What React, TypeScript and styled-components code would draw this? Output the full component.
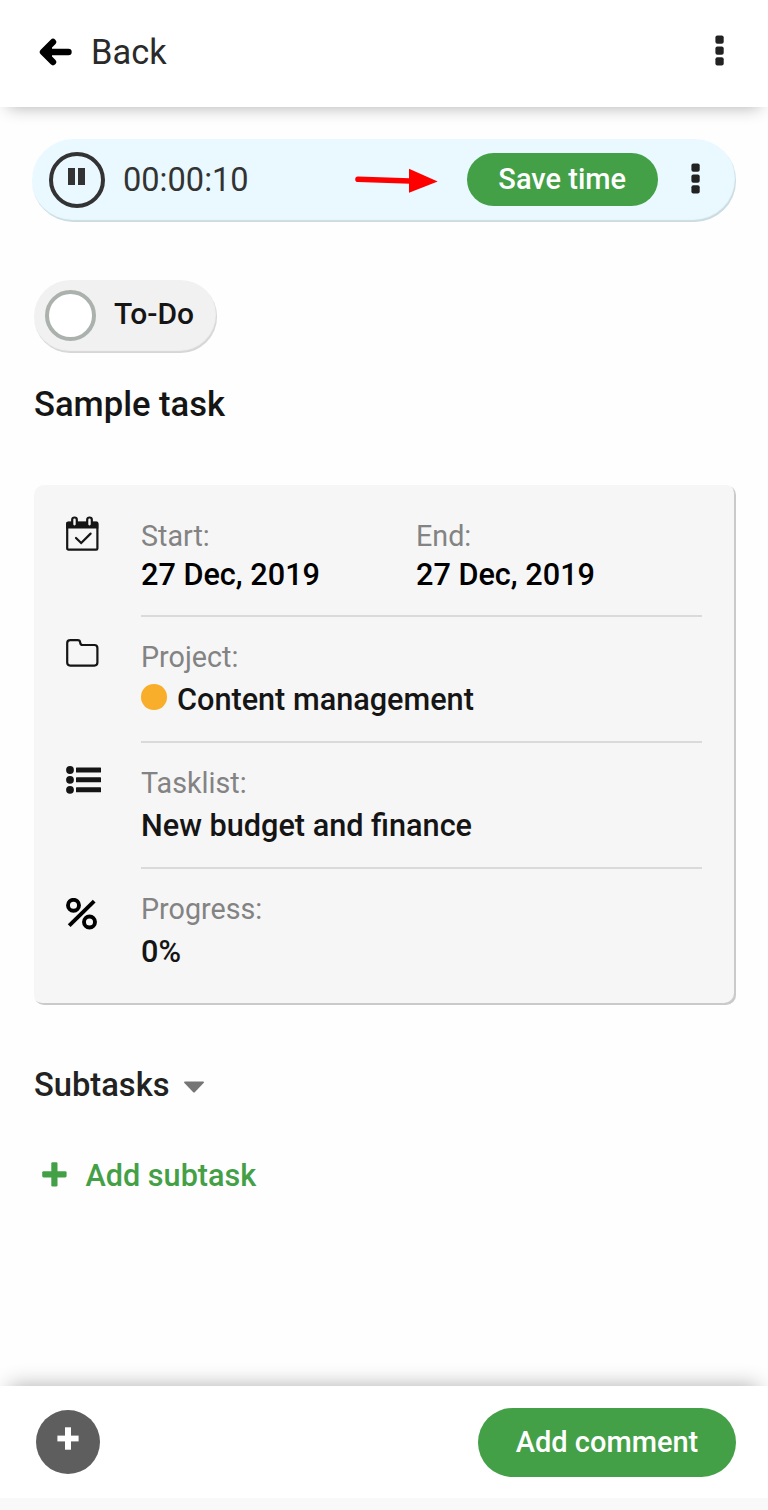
import React from "react";
import styled, { createGlobalStyle } from "styled-components";

const GlobalStyle = createGlobalStyle`
  * { box-sizing: border-box; }
  body {
    margin: 0;
    background: #fefefe;
    font-family: Roboto, "Liberation Sans", sans-serif;
    color: #151515;
  }
  button {
    font-family: inherit;
    border: 0;
    padding: 0;
    margin: 0;
    background: none;
    cursor: pointer;
    color: inherit;
  }
  svg { display: block; flex: none; }
`;

const Screen = styled.div`
  width: 100%;
  height: 1510px;
  display: flex;
  flex-direction: column;
`;

const Header = styled.header`
  height: 107px;
  flex: none;
  display: flex;
  align-items: flex-start;
  justify-content: space-between;
  padding: 32px 44.5px 0 39px;
  background: #fff;
  box-shadow: 0 8px 16px -8px rgba(0, 0, 0, 0.32);
`;

const BackButton = styled.button`
  display: flex;
  align-items: center;
  gap: 18px;
  height: 40px;
`;

const Text = styled.span<{ $size: number; $line: number; $weight?: number; $color?: string }>`
  display: block;
  white-space: nowrap;
  font-size: ${(p) => p.$size}px;
  line-height: ${(p) => p.$line}px;
  font-weight: ${(p) => p.$weight ?? 400};
  color: ${(p) => p.$color ?? "#151515"};
`;

const MenuButton = styled.button<{ $top?: number }>`
  margin-top: ${(p) => p.$top ?? 0}px;
`;

const Main = styled.main`
  flex: 1;
  padding: 32px 32px 0 34px;
`;

const Timer = styled.section`
  height: 83px;
  margin-left: -2px;
  border-radius: 42px;
  background: #e9f9ff;
  box-shadow: inset -1px -2px 1px #cbdbe0;
  display: flex;
  align-items: flex-start;
  padding: 13px 36px 0 17px;
`;

const PauseButton = styled.button`
  width: 56px;
  height: 56px;
  border: 4px solid #333;
  border-radius: 50%;
  display: flex;
  justify-content: center;
  gap: 3px;
  padding: 12px 1px 0 0;
`;

const PauseBar = styled.span`
  width: 7px;
  height: 17px;
  background: #333;
`;

const Elapsed = styled.div`
  margin: 7px 0 0 18px;
  flex: 1;
`;

const SaveButton = styled.button`
  width: 191.5px;
  height: 53px;
  margin: 1px 33px 0 28.5px;
  border-radius: 27px;
  background: #44a047;
  display: flex;
  justify-content: center;
`;

const Status = styled.button`
  width: 183px;
  height: 73px;
  margin-top: 58px;
  border-radius: 37px;
  background: #f1f1f1;
  box-shadow: inset -1px -2px 1px #d6d6d6;
  display: flex;
  align-items: flex-start;
  gap: 18px;
  padding: 10px 0 0 11px;
`;

const StatusRing = styled.span`
  width: 51px;
  height: 51px;
  border: 4px solid #abb1ac;
  border-radius: 50%;
  background: #fff;
`;

const Title = styled.h1`
  margin: 30px 0 0;
  height: 44px;
`;

const Card = styled.section`
  margin-top: 58px;
  height: 519.5px;
  border-radius: 10px;
  background: #f6f6f6;
  box-shadow: inset -2px -2px 0 #cacaca;
  padding-right: 34px;
`;

const Row = styled.div<{ $height: number }>`
  height: ${(p) => p.$height}px;
  display: flex;
`;

const IconCell = styled.div<{ $top: number }>`
  width: 107px;
  flex: none;
  padding: ${(p) => p.$top}px 0 0 32px;
`;

const Fields = styled.div<{ $top: number; $last?: boolean }>`
  flex: 1;
  display: flex;
  padding-top: ${(p) => p.$top}px;
  border-bottom: ${(p) => (p.$last ? "0" : "2px solid #dadada")};
`;

const Field = styled.div<{ $width?: number }>`
  width: ${(p) => (p.$width ? `${p.$width}px` : "auto")};
`;

const Value = styled.div`
  display: flex;
  align-items: flex-start;
  gap: 10.5px;
`;

const Dot = styled.i`
  width: 25.5px;
  height: 25.5px;
  margin-top: 7px;
  border-radius: 50%;
  background: #f9ae2b;
`;

const SubtasksHeader = styled.button`
  display: flex;
  align-items: flex-start;
  gap: 14px;
  margin-top: 57.5px;
`;

const CaretSlot = styled.span`
  padding-top: 19px;
`;

const AddSubtask = styled.button`
  display: flex;
  align-items: flex-start;
  gap: 18.5px;
  margin: 47px 0 0 8px;
`;

const PlusSlot = styled.span`
  padding-top: 7px;
`;

const Footer = styled.footer`
  flex: none;
  height: 124px;
  border-bottom: 12px solid #f9f9f9;
  background: #fff;
  box-shadow: 0 -10px 20px -10px rgba(0, 0, 0, 0.32);
  display: flex;
  align-items: flex-start;
  justify-content: space-between;
  padding: 22px 32px 0 36px;
`;

const PlusButton = styled.button`
  width: 64px;
  height: 64px;
  margin-top: 2.4px;
  border-radius: 50%;
  background: #5e5e5e;
  display: flex;
  justify-content: center;
  padding-top: 16.6px;
`;

const CommentButton = styled.button`
  width: 258px;
  height: 69px;
  border-radius: 35px;
  background: #44a047;
  display: flex;
  justify-content: center;
`;

const Kebab = () => (
  <svg width="9" height="31" viewBox="0 0 9 31" fill="#222">
    <rect x="0.4" y="0.4" width="8.3" height="8.3" rx="2" />
    <rect x="0.4" y="11.4" width="8.3" height="8.3" rx="2" />
    <rect x="0.4" y="22.2" width="8.3" height="8.3" rx="2" />
  </svg>
);

const BackArrow = () => (
  <svg width="34" height="28" viewBox="0 0 34 28" fill="none" stroke="#000" strokeWidth="6.4" strokeLinecap="round" strokeLinejoin="round">
    <path d="M14 4 4 14l10 10M5 14h24.5" />
    <path d="M13 8v12l-7-6z" fill="#000" stroke="none" />
  </svg>
);

const ArrowSlot = styled.div`
  padding-top: 15px;
`;

const PointerArrow = () => (
  <svg width="83" height="26" viewBox="0 0 83 26">
    <path d="M3 12.3 55 14" stroke="#f00" strokeWidth="5.6" strokeLinecap="round" />
    <path d="M54 1.7v24l28.7-11.2z" fill="#f00" />
  </svg>
);

const CalendarIcon = () => (
  <svg width="33" height="36" viewBox="0 0 33 36" fill="none" stroke="#151515" strokeWidth="2.2">
    <rect x="1.2" y="6.8" width="30.2" height="26.8" rx="1.2" />
    <path d="M2 5.5h29q1.3 0 1.3 1.5v5.5H.2V7Q.2 5.5 2 5.5z" fill="#151515" stroke="none" />
    <rect x="6.2" y="1.5" width="4.6" height="9" rx="2.2" fill="#f6f6f6" />
    <rect x="21.2" y="1.5" width="4.6" height="9" rx="2.2" fill="#f6f6f6" />
    <path d="m10 22 5.2 5 9.4-9.4" strokeLinecap="round" />
  </svg>
);

const FolderIcon = () => (
  <svg width="33" height="28" viewBox="0 0 33 28" fill="none" stroke="#151515" strokeWidth="2.2" strokeLinejoin="round">
    <path d="M4 1.2h7.6Q14 1.2 14.2 3.6T16.6 6H28.4q3 0 3 3v14.6q0 3-3 3H4.2q-3 0-3-3V4.2q0-3 3-3z" />
  </svg>
);

const ListIcon = () => (
  <svg width="36" height="28" viewBox="0 0 36 28" fill="#151515">
    {[4, 13.8, 23.8].map((y) => (
      <g key={y}>
        <circle cx="4" cy={y} r="3.9" />
        <rect x="10" y={y - 2.5} width="25" height="5" rx="0.6" />
      </g>
    ))}
  </svg>
);

const PercentIcon = () => (
  <svg width="33" height="32" viewBox="0 0 33 32" fill="none" stroke="#000" strokeWidth="3.9">
    <circle cx="7.5" cy="7.3" r="5.5" />
    <circle cx="23.5" cy="24" r="5.5" />
    <path d="M28.2 3.2 3.2 27.6" />
  </svg>
);

const Caret = () => (
  <svg width="20" height="12" viewBox="0 0 20 12">
    <path d="M1 .5h18.2q1.3.3.4 1.5L11 11q-1 1-2 0L.4 2Q-.5.8 1 .5z" fill="#757575" />
  </svg>
);

const GreenPlus = () => (
  <svg width="25" height="25" viewBox="0 0 25 25" fill="#44a047">
    <rect x="9.3" y="0.2" width="6.2" height="24.4" rx="1.4" />
    <rect x="0.2" y="9.2" width="24.4" height="6.2" rx="1.4" />
  </svg>
);

const WhitePlus = () => (
  <svg width="22" height="23" viewBox="0 0 22 23" fill="#fff">
    <rect x="8" y="0.3" width="6" height="22.4" />
    <rect x="0.4" y="8.6" width="21.2" height="5.8" />
  </svg>
);

interface EntryProps {
  label: string;
  value: string;
  compact?: boolean;
  width?: number;
  dot?: boolean;
}

const Entry = ({ label, value, compact, width, dot }: EntryProps) => (
  <Field $width={width}>
    <Text $size={28.7} $line={39} $color="#838383">{label}</Text>
    <Value>
      {dot && <Dot />}
      <Text $size={30.65} $line={compact ? 38 : 46} $weight={500} $color={compact ? "#000" : "#151515"}>{value}</Text>
    </Value>
  </Field>
);

export default function App() {
  return (
    <Screen>
      <GlobalStyle />
      <Header>
        <BackButton>
          <BackArrow />
          <Text $size={34.4} $line={41} $color="#2a2a2a">Back</Text>
        </BackButton>
        <MenuButton $top={3} aria-label="More">
          <Kebab />
        </MenuButton>
      </Header>
      <Main>
        <Timer>
          <PauseButton aria-label="Pause">
            <PauseBar />
            <PauseBar />
          </PauseButton>
          <Elapsed>
            <Text $size={32.6} $line={42} $color="#333">00:00:10</Text>
          </Elapsed>
          <ArrowSlot>
            <PointerArrow />
          </ArrowSlot>
          <SaveButton>
            <Text $size={29} $line={52} $weight={500} $color="#fff">Save time</Text>
          </SaveButton>
          <MenuButton $top={11} aria-label="Timer options">
            <Kebab />
          </MenuButton>
        </Timer>
        <Status>
          <StatusRing />
          <Text $size={30} $line={47} $weight={500}>To-Do</Text>
        </Status>
        <Title>
          <Text $size={34.6} $line={42} $weight={500}>Sample task</Text>
        </Title>
        <Card>
          <Row $height={132}>
            <IconCell $top={31}><CalendarIcon /></IconCell>
            <Fields $top={32}>
              <Entry label="Start:" value="27 Dec, 2019" compact width={275} />
              <Entry label="End:" value="27 Dec, 2019" compact />
            </Fields>
          </Row>
          <Row $height={126}>
            <IconCell $top={22}><FolderIcon /></IconCell>
            <Fields $top={21}>
              <Entry label="Project:" value="Content management" dot />
            </Fields>
          </Row>
          <Row $height={126}>
            <IconCell $top={23}><ListIcon /></IconCell>
            <Fields $top={21}>
              <Entry label="Tasklist:" value="New budget and finance" />
            </Fields>
          </Row>
          <Row $height={133}>
            <IconCell $top={29}><PercentIcon /></IconCell>
            <Fields $top={21} $last>
              <Entry label="Progress:" value="0%" />
            </Fields>
          </Row>
        </Card>
        <SubtasksHeader>
          <Text $size={32.7} $line={46} $weight={500} $color="#222">Subtasks</Text>
          <CaretSlot>
            <Caret />
          </CaretSlot>
        </SubtasksHeader>
        <AddSubtask>
          <PlusSlot>
            <GreenPlus />
          </PlusSlot>
          <Text $size={30.6} $line={42} $weight={500} $color="#44a047">Add subtask</Text>
        </AddSubtask>
      </Main>
      <Footer>
        <PlusButton aria-label="Add">
          <WhitePlus />
        </PlusButton>
        <CommentButton>
          <Text $size={29} $line={69} $weight={500} $color="#fff">Add comment</Text>
        </CommentButton>
      </Footer>
    </Screen>
  );
}
